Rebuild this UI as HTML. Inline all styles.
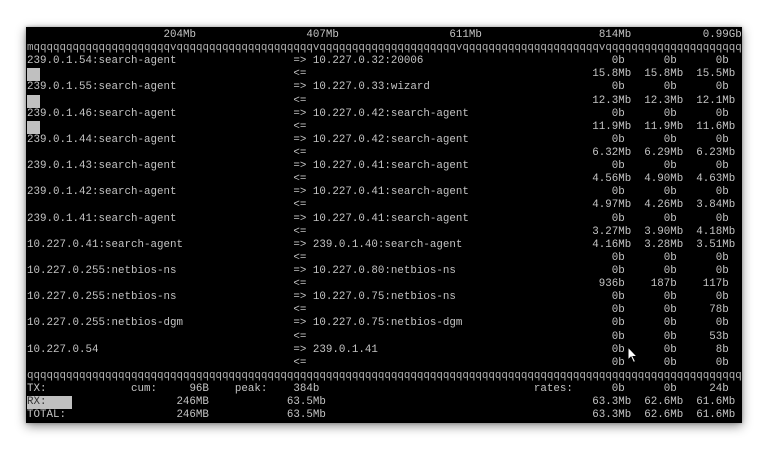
<!DOCTYPE html>
<html><head><meta charset="utf-8"><style>
html,body{margin:0;padding:0;background:#fff;width:768px;height:452px;overflow:hidden}
#t{position:absolute;left:26px;top:27px;width:716px;height:396px;background:#000;box-shadow:0 3px 10px rgba(0,0,0,.45),0 0 3px rgba(0,0,0,.3);overflow:hidden}
#in{position:absolute;left:1px;top:2px;width:715px;font-family:"Liberation Mono",monospace;font-size:10.833px;color:#c4c4c4;white-space:normal}
.r{position:relative;height:13.12px;line-height:13.12px;overflow:hidden}
.r span{position:absolute;top:0;white-space:pre}
.a{left:85ch;width:8ch;text-align:right}
.b{left:93ch;width:8ch;text-align:right}
.c{left:101ch;width:8ch;text-align:right}
.ar{left:41ch}.d{left:44ch}
.bar{position:absolute;left:-1px;top:0;width:14px;height:13.12px;background:#c0c0c0}
.sep{overflow:hidden;color:#b0b0b0;white-space:pre}
</style></head><body>
<div id="t"><div id="in">
<div class="r"><span style="left:21ch">204Mb</span><span style="left:43ch">407Mb</span><span style="left:65ch">611Mb</span><span style="left:88ch">814Mb</span><span style="left:104ch">0.99Gb</span></div>
<div class="r sep">mqqqqqqqqqqqqqqqqqqqqqvqqqqqqqqqqqqqqqqqqqqqvqqqqqqqqqqqqqqqqqqqqqvqqqqqqqqqqqqqqqqqqqqqvqqqqqqqqqqqqqqqqqqqqqq</div>
<div class="r"><span style="left:0">239.0.1.54:search-agent</span><span class="ar">=&gt;</span><span class="d">10.227.0.32:20006</span><span class="a">0b </span><span class="b">0b </span><span class="c">0b </span></div>
<div class="r"><i class="bar"></i><span class="ar">&lt;=</span><span class="a">15.8Mb</span><span class="b">15.8Mb</span><span class="c">15.5Mb</span></div>
<div class="r"><span style="left:0">239.0.1.55:search-agent</span><span class="ar">=&gt;</span><span class="d">10.227.0.33:wizard</span><span class="a">0b </span><span class="b">0b </span><span class="c">0b </span></div>
<div class="r"><i class="bar"></i><span class="ar">&lt;=</span><span class="a">12.3Mb</span><span class="b">12.3Mb</span><span class="c">12.1Mb</span></div>
<div class="r"><span style="left:0">239.0.1.46:search-agent</span><span class="ar">=&gt;</span><span class="d">10.227.0.42:search-agent</span><span class="a">0b </span><span class="b">0b </span><span class="c">0b </span></div>
<div class="r"><i class="bar"></i><span class="ar">&lt;=</span><span class="a">11.9Mb</span><span class="b">11.9Mb</span><span class="c">11.6Mb</span></div>
<div class="r"><span style="left:0">239.0.1.44:search-agent</span><span class="ar">=&gt;</span><span class="d">10.227.0.42:search-agent</span><span class="a">0b </span><span class="b">0b </span><span class="c">0b </span></div>
<div class="r"><span class="ar">&lt;=</span><span class="a">6.32Mb</span><span class="b">6.29Mb</span><span class="c">6.23Mb</span></div>
<div class="r"><span style="left:0">239.0.1.43:search-agent</span><span class="ar">=&gt;</span><span class="d">10.227.0.41:search-agent</span><span class="a">0b </span><span class="b">0b </span><span class="c">0b </span></div>
<div class="r"><span class="ar">&lt;=</span><span class="a">4.56Mb</span><span class="b">4.90Mb</span><span class="c">4.63Mb</span></div>
<div class="r"><span style="left:0">239.0.1.42:search-agent</span><span class="ar">=&gt;</span><span class="d">10.227.0.41:search-agent</span><span class="a">0b </span><span class="b">0b </span><span class="c">0b </span></div>
<div class="r"><span class="ar">&lt;=</span><span class="a">4.97Mb</span><span class="b">4.26Mb</span><span class="c">3.84Mb</span></div>
<div class="r"><span style="left:0">239.0.1.41:search-agent</span><span class="ar">=&gt;</span><span class="d">10.227.0.41:search-agent</span><span class="a">0b </span><span class="b">0b </span><span class="c">0b </span></div>
<div class="r"><span class="ar">&lt;=</span><span class="a">3.27Mb</span><span class="b">3.90Mb</span><span class="c">4.18Mb</span></div>
<div class="r"><span style="left:0">10.227.0.41:search-agent</span><span class="ar">=&gt;</span><span class="d">239.0.1.40:search-agent</span><span class="a">4.16Mb</span><span class="b">3.28Mb</span><span class="c">3.51Mb</span></div>
<div class="r"><span class="ar">&lt;=</span><span class="a">0b </span><span class="b">0b </span><span class="c">0b </span></div>
<div class="r"><span style="left:0">10.227.0.255:netbios-ns</span><span class="ar">=&gt;</span><span class="d">10.227.0.80:netbios-ns</span><span class="a">0b </span><span class="b">0b </span><span class="c">0b </span></div>
<div class="r"><span class="ar">&lt;=</span><span class="a">936b </span><span class="b">187b </span><span class="c">117b </span></div>
<div class="r"><span style="left:0">10.227.0.255:netbios-ns</span><span class="ar">=&gt;</span><span class="d">10.227.0.75:netbios-ns</span><span class="a">0b </span><span class="b">0b </span><span class="c">0b </span></div>
<div class="r"><span class="ar">&lt;=</span><span class="a">0b </span><span class="b">0b </span><span class="c">78b </span></div>
<div class="r"><span style="left:0">10.227.0.255:netbios-dgm</span><span class="ar">=&gt;</span><span class="d">10.227.0.75:netbios-dgm</span><span class="a">0b </span><span class="b">0b </span><span class="c">0b </span></div>
<div class="r"><span class="ar">&lt;=</span><span class="a">0b </span><span class="b">0b </span><span class="c">53b </span></div>
<div class="r"><span style="left:0">10.227.0.54</span><span class="ar">=&gt;</span><span class="d">239.0.1.41</span><span class="a">0b </span><span class="b">0b </span><span class="c">8b </span></div>
<div class="r"><span class="ar">&lt;=</span><span class="a">0b </span><span class="b">0b </span><span class="c">0b </span></div>
<div class="r sep">qqqqqqqqqqqqqqqqqqqqqqqqqqqqqqqqqqqqqqqqqqqqqqqqqqqqqqqqqqqqqqqqqqqqqqqqqqqqqqqqqqqqqqqqqqqqqqqqqqqqqqqqqqqqqqqq</div>
<div class="r"><span style="left:0">TX:</span><span style="left:16ch">cum:</span><span style="left:25ch">96B</span><span style="left:32ch">peak:</span><span style="left:41ch">384b</span><span style="left:78ch">rates:</span><span class="a">0b </span><span class="b">0b </span><span class="c">24b </span></div>
<div class="r"><i class="bar" style="width:46px"></i><span style="left:0;color:#333">RX:</span><span style="left:23ch">246MB</span><span style="left:40ch">63.5Mb</span><span class="a">63.3Mb</span><span class="b">62.6Mb</span><span class="c">61.6Mb</span></div>
<div class="r"><span style="left:0">TOTAL:</span><span style="left:23ch">246MB</span><span style="left:40ch">63.5Mb</span><span class="a">63.3Mb</span><span class="b">62.6Mb</span><span class="c">61.6Mb</span></div>
</div></div>
<svg style="position:absolute;left:627px;top:346px" width="12" height="18" viewBox="0 0 12 18"><path d="M1 1 L1 14 L4 11 L6.5 16.5 L8.5 15.5 L6 10.5 L10 10.5 Z" fill="#fff" stroke="#000" stroke-width="1"/></svg>
</body></html>
